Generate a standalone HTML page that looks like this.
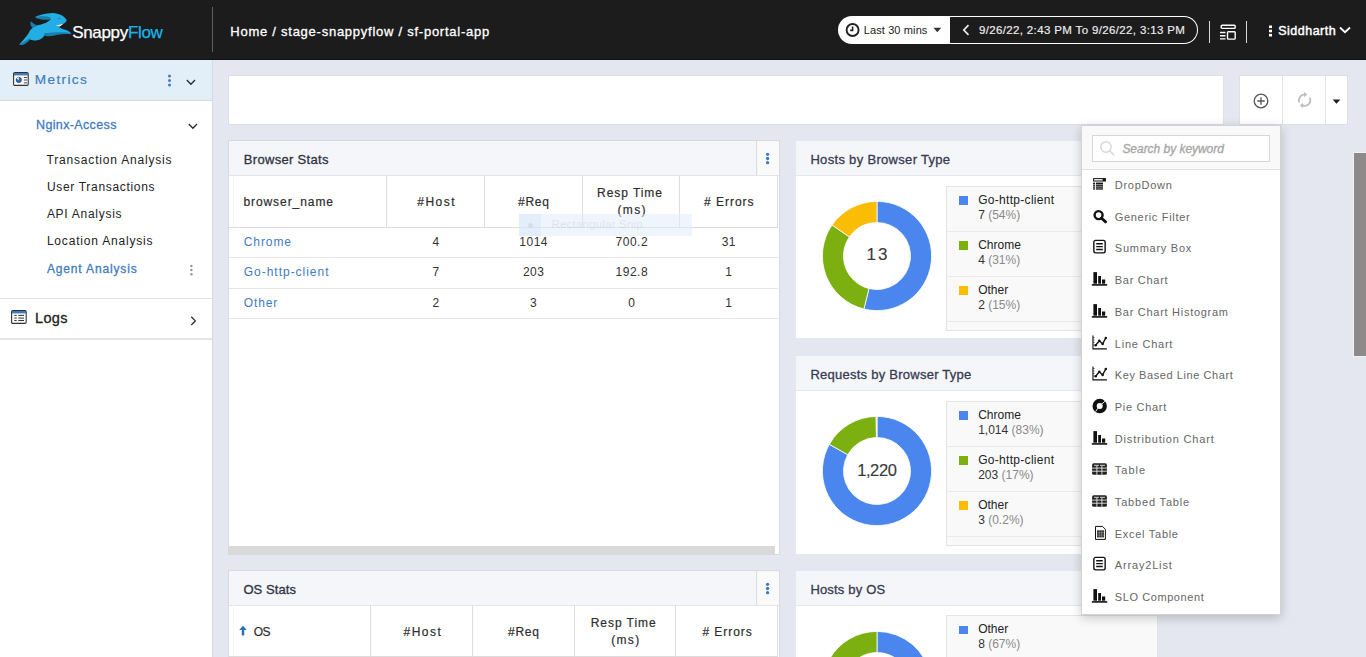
<!DOCTYPE html>
<html><head><meta charset="utf-8">
<style>
*{box-sizing:border-box;margin:0;padding:0}
html,body{width:1366px;height:657px;overflow:hidden}
body{position:relative;background:#e4e7ef;font-family:"Liberation Sans",sans-serif;color:#222}
.a{position:absolute;white-space:nowrap;line-height:normal}
.panel{background:#fff;border:1px solid #dcdfe5}
.ph{background:#f5f6f8;border-bottom:1px solid #e2e4e9}
.vl{position:absolute;background:#dedede;width:1px}
.hl{position:absolute;background:#e6e6e6;height:1px}
</style></head>
<body>
<div class="a" style="left:0;top:0;width:1366px;height:60px;background:#1c1c1c"></div>
<div class="a" style="left:0;top:59px;width:1366px;height:1px;background:#121212"></div>
<svg class="a" style="left:17px;top:10px" width="56" height="38" viewBox="0 0 968 657">
 <path fill="#22aee5" d="M310 125 C360 90 480 55 620 50 C720 55 820 100 860 175 C850 210 830 222 820 225 C770 245 720 258 685 266 C720 295 780 330 850 345 C900 365 935 395 940 420 C880 400 760 395 640 410 C560 420 500 430 470 440 C450 490 380 528 300 526 C260 525 235 515 222 505 C170 545 100 590 35 598 C80 555 140 480 200 400 C230 340 270 295 340 270 C450 240 530 225 580 160 C520 125 420 115 310 125 Z"/>
 <path fill="#177fae" d="M310 130 C380 105 480 100 545 115 C575 125 590 145 585 160 C540 175 460 170 400 158 C360 150 330 142 310 130 Z"/>
 <path fill="#177fae" d="M235 195 C270 225 320 255 345 268 C310 280 280 295 265 305 C240 290 222 240 235 195 Z"/>
 <path fill="#177fae" d="M470 400 C560 395 700 380 820 385 C880 390 925 405 940 420 C880 410 780 410 700 430 C620 455 520 460 470 440 Z"/>
 <path fill="#177fae" d="M35 598 C110 560 170 520 235 480 C220 530 170 580 110 600 C80 610 50 608 35 598 Z"/>
 <path fill="#d7f0e6" d="M672 266 C720 255 790 238 822 224 C790 258 760 276 735 290 C715 282 690 272 672 266 Z"/>
 <path fill="#1c1c1c" d="M735 290 C760 276 790 258 822 224 C810 262 790 295 790 318 C770 312 750 300 735 290 Z"/>
 <circle cx="728" cy="148" r="13" fill="#0e6e92"/>
</svg>
<div class="a" style="left:72.2px;top:22.9px;font-size:17px;color:#fff;letter-spacing:-0.32px;-webkit-text-stroke:0.25px #fff">Snappy<span style="color:#1ab4ea;-webkit-text-stroke:0.25px #1ab4ea">Flow</span></div>
<div class="a" style="left:212px;top:7px;width:1px;height:45px;background:#5e5e5e"></div>
<div class="a" style="left:230.30px;top:23.61px;font-size:13px;color:#fff;letter-spacing:0.747px;-webkit-text-stroke:0.3px #fff;">Home / stage-snappyflow / sf-portal-app</div>
<div class="a" style="left:838px;top:16px;width:360px;height:28px;border-radius:14px;background:#fff"></div>
<div class="a" style="left:950px;top:17px;width:247px;height:26px;border-radius:0 13px 13px 0;background:#1c1c1c"></div>
<svg class="a" style="left:845px;top:22px" width="16" height="16" viewBox="0 0 16 16"><circle cx="7.6" cy="8" r="6" fill="none" stroke="#222" stroke-width="1.9"/><path d="M7.6 4.6V8.4H5.2" fill="none" stroke="#222" stroke-width="1.6"/></svg>
<div class="a" style="left:863.70px;top:23.54px;font-size:11px;color:#222;letter-spacing:0.120px;">Last 30 mins</div>
<svg class="a" style="left:933px;top:27px" width="9" height="6" viewBox="0 0 9 6"><path d="M0.5 0.8H8.2L4.35 5.2Z" fill="#333"/></svg>
<svg class="a" style="left:961px;top:24px" width="10" height="12" viewBox="0 0 10 12"><path d="M7.5 1.2L2.8 6L7.5 10.8" fill="none" stroke="#eee" stroke-width="1.7"/></svg>
<div class="a" style="left:978.90px;top:24.08px;font-size:11.5px;color:#ececec;letter-spacing:0.357px;-webkit-text-stroke:0.18px #ececec;">9/26/22, 2:43 PM To 9/26/22, 3:13 PM</div>
<div class="a" style="left:1209px;top:21px;width:1px;height:22px;background:#d8d8d8"></div>
<svg class="a" style="left:1219px;top:23.5px" width="18" height="17" viewBox="0 0 18 17"><rect x="2.2" y="1.2" width="14" height="3.2" rx="1" fill="none" stroke="#fff" stroke-width="1.4"/><rect x="8.5" y="7.8" width="7.7" height="7.3" rx="0.8" fill="none" stroke="#fff" stroke-width="1.4"/><path d="M1 8.5H6.5M1 11.7H6.5M1 14.9H6.5" stroke="#fff" stroke-width="1.4"/></svg>
<div class="a" style="left:1246px;top:21px;width:1px;height:22px;background:#d8d8d8"></div>
<svg class="a" style="left:1268px;top:25px" width="5" height="12" viewBox="0 0 5 12"><rect x="1" y="0.5" width="3" height="2.6" fill="#fff"/><rect x="1" y="4.7" width="3" height="2.6" fill="#fff"/><rect x="1" y="8.9" width="3" height="2.6" fill="#fff"/></svg>
<div class="a" style="left:1278.20px;top:24.06px;font-size:12.5px;color:#fff;letter-spacing:0.498px;-webkit-text-stroke:0.3px #fff;-webkit-text-stroke:0.45px #fff;">Siddharth</div>
<svg class="a" style="left:1339px;top:26px" width="12" height="8" viewBox="0 0 12 8"><path d="M1 1.5L6 6.2L11 1.5" fill="none" stroke="#fff" stroke-width="1.8"/></svg>
<div class="a" style="left:0;top:60px;width:213px;height:597px;background:#fff;border-right:1px solid #d6d9e0"></div>
<div class="a" style="left:0;top:60px;width:212px;height:41px;background:#e2eff8;border-bottom:1.5px solid #d9dbdf"></div>
<svg class="a" style="left:13px;top:72px" width="16" height="14" viewBox="0 0 16 14"><rect x="0.6" y="0.6" width="14.6" height="12.8" rx="1.2" fill="#fcfcfc" stroke="#333" stroke-width="1.1"/><rect x="1.1" y="1.1" width="13.6" height="1.7" fill="#1a73d0"/><path d="M1 3.1H15" stroke="#333" stroke-width="0.5"/><circle cx="5.8" cy="7.9" r="2.6" fill="#1a73d0" stroke="#333" stroke-width="0.7"/><path d="M5.8 7.9V5.3A2.6 2.6 0 0 0 3.6 6.5Z" fill="#fff"/><path d="M10.9 5.5H14M10.9 8H14M10.9 10.9H14" stroke="#333" stroke-width="0.9"/></svg>
<div class="a" style="left:34.80px;top:72.16px;font-size:13.6px;color:#3f7cbf;letter-spacing:1.348px;-webkit-text-stroke:0.2px #3f7cbf;">Metrics</div>
<svg class="a" style="left:167px;top:74px" width="5" height="13" viewBox="0 0 5 13"><circle cx="2.5" cy="2" r="1.5" fill="#3f7cbf"/><circle cx="2.5" cy="6.5" r="1.5" fill="#3f7cbf"/><circle cx="2.5" cy="11" r="1.5" fill="#3f7cbf"/></svg>
<svg class="a" style="left:186px;top:79px" width="10" height="7" viewBox="0 0 10 7"><path d="M0.8 1L4.9 5.3L9 1" fill="none" stroke="#2a2a2a" stroke-width="1.3"/></svg>
<div class="a" style="left:36.00px;top:117.56px;font-size:12.5px;color:#3f7cbf;letter-spacing:0.362px;-webkit-text-stroke:0.3px #3f7cbf;">Nginx-Access</div>
<svg class="a" style="left:188px;top:123.3px" width="10" height="7" viewBox="0 0 10 7"><path d="M0.8 1L4.9 5.3L9 1" fill="none" stroke="#2a2a2a" stroke-width="1.3"/></svg>
<div class="a" style="left:46.60px;top:152.92px;font-size:12px;color:#222;letter-spacing:0.810px;">Transaction Analysis</div>
<div class="a" style="left:46.90px;top:179.92px;font-size:12px;color:#222;letter-spacing:0.687px;">User Transactions</div>
<div class="a" style="left:46.90px;top:207.02px;font-size:12px;color:#222;letter-spacing:0.727px;">API Analysis</div>
<div class="a" style="left:46.90px;top:234.02px;font-size:12px;color:#222;letter-spacing:0.810px;">Location Analysis</div>
<div class="a" style="left:46.90px;top:261.52px;font-size:12px;color:#3f7cbf;letter-spacing:0.852px;-webkit-text-stroke:0.3px #3f7cbf;">Agent Analysis</div>
<svg class="a" style="left:189px;top:263.5px" width="5" height="13" viewBox="0 0 5 13"><circle cx="2.4" cy="2" r="1.25" fill="#999"/><circle cx="2.4" cy="6.1" r="1.25" fill="#999"/><circle cx="2.4" cy="10.2" r="1.25" fill="#999"/></svg>
<div class="a" style="left:0;top:298px;width:212px;height:1px;background:#e3e3e6"></div>
<svg class="a" style="left:11px;top:310px" width="16" height="14" viewBox="0 0 16 14"><rect x="0.6" y="0.6" width="14.6" height="12.8" rx="1.2" fill="#fcfcfc" stroke="#333" stroke-width="1.1"/><rect x="1.1" y="1.1" width="13.6" height="1.7" fill="#1a73d0"/><path d="M1 3.1H15" stroke="#333" stroke-width="0.5"/><path d="M3.3 5.4H5.7M3.3 8.1H5.7M3.3 10.5H5.7M7.3 5.4H13M7.3 8.1H13M7.3 10.5H13" stroke="#333" stroke-width="1"/></svg>
<div class="a" style="left:35.00px;top:310.03px;font-size:14.5px;color:#222;letter-spacing:0.316px;-webkit-text-stroke:0.3px #222;">Logs</div>
<svg class="a" style="left:190px;top:316px" width="7" height="10" viewBox="0 0 7 10"><path d="M1.3 0.8L5.3 4.9L1.3 9" fill="none" stroke="#2a2a2a" stroke-width="1.3"/></svg>
<div class="a" style="left:0;top:338px;width:212px;height:1.5px;background:#e3e5e9"></div>
<div class="a panel" style="left:228px;top:75px;width:996px;height:50px"></div>
<div class="a panel" style="left:1239px;top:75px;width:109px;height:50px"></div>
<div class="vl" style="left:1282px;top:76px;height:48px;background:#e4e4e4"></div>
<div class="vl" style="left:1325px;top:76px;height:48px;background:#e4e4e4"></div>
<svg class="a" style="left:1252.5px;top:92.5px" width="16" height="16" viewBox="0 0 16 16"><circle cx="8" cy="8" r="6.8" fill="none" stroke="#555" stroke-width="1.3"/><path d="M8 4.3V11.7M4.3 8H11.7" stroke="#555" stroke-width="1.3"/></svg>
<svg class="a" style="left:1294px;top:90px" width="20" height="20" viewBox="0 0 20 20"><path d="M5.3 12.3A5.5 5.5 0 0 1 10.2 4.6M15.6 7.6A5.5 5.5 0 0 1 8.8 15.4" fill="none" stroke="#bdbdbd" stroke-width="1.8"/><path d="M13.3 4.6L10 1.9V7.3Z M5.8 15.4L9.1 12.7V18.1Z" fill="#bdbdbd"/></svg>
<svg class="a" style="left:1332px;top:98.5px" width="9" height="6" viewBox="0 0 9 6"><path d="M0.6 0.6H8.4L4.5 4.8Z" fill="#222"/></svg>
<div class="a" style="left:1353px;top:152px;width:14px;height:205px;background:#8e8a8a;border:1px solid #f2f2f4;border-right:none"></div>
<div class="a panel" style="left:228px;top:140px;width:552px;height:415px;border-color:#dadada"></div>
<div class="a ph" style="left:229px;top:141px;width:550px;height:35px;background:#f5f6f9"></div>
<div class="a" style="left:243.80px;top:151.70px;font-size:13px;color:#2e3344;letter-spacing:0.307px;-webkit-text-stroke:0.3px #2e3344;">Browser Stats</div>
<div class="vl" style="left:756px;top:141px;height:34px;background:#dcdcdc"></div>
<div class="a" style="left:758px;top:142px;width:21px;height:33px;background:#fafafa"></div>
<svg class="a" style="left:765px;top:152px" width="5" height="13" viewBox="0 0 5 13"><circle cx="2.6" cy="2.3" r="1.65" fill="#3b7bc4"/><circle cx="2.6" cy="6.5" r="1.65" fill="#3b7bc4"/><circle cx="2.6" cy="10.7" r="1.65" fill="#3b7bc4"/></svg>
<div class="vl" style="left:386px;top:176px;height:51px"></div>
<div class="vl" style="left:484px;top:176px;height:51px"></div>
<div class="vl" style="left:582px;top:176px;height:51px"></div>
<div class="vl" style="left:679px;top:176px;height:51px"></div>
<div class="vl" style="left:777px;top:176px;height:51px"></div>
<div class="vl" style="left:233px;top:176px;height:51px;background:#f6f6f6"></div>
<div class="hl" style="left:229px;top:227px;width:549px;background:#dcdcdc"></div>
<div class="a" style="left:243.40px;top:195.02px;font-size:12px;color:#2b2b2b;letter-spacing:0.930px;-webkit-text-stroke:0.18px #2b2b2b;">browser_name</div>
<div class="a" style="left:417.30px;top:195.22px;font-size:12px;color:#2b2b2b;letter-spacing:1.460px;-webkit-text-stroke:0.18px #2b2b2b;">#Host</div>
<div class="a" style="left:518.10px;top:195.22px;font-size:12px;color:#2b2b2b;letter-spacing:0.704px;-webkit-text-stroke:0.18px #2b2b2b;">#Req</div>
<div class="a" style="left:597.05px;top:186.02px;font-size:12px;color:#2b2b2b;letter-spacing:0.943px;-webkit-text-stroke:0.18px #2b2b2b;">Resp Time</div>
<div class="a" style="left:617.45px;top:202.72px;font-size:12px;color:#2b2b2b;letter-spacing:1.367px;-webkit-text-stroke:0.18px #2b2b2b;">(ms)</div>
<div class="a" style="left:704.10px;top:195.02px;font-size:12px;color:#2b2b2b;letter-spacing:0.959px;-webkit-text-stroke:0.18px #2b2b2b;"># Errors</div>
<div class="a" style="left:519px;top:214px;width:173px;height:21.5px;background:rgba(222,236,252,0.5)"></div>
<div class="a" style="left:519px;top:214px;width:22px;height:21.5px;background:rgba(210,226,246,0.35)"></div>
<div class="a" style="left:527.5px;top:222.5px;width:5px;height:5px;border-radius:3px;background:rgba(200,210,225,0.6)"></div>
<div class="a" style="left:551.5px;top:217.5px;font-size:11.5px;color:rgba(150,165,185,0.22);letter-spacing:0.2px">Rectangular Snip</div>
<div class="hl" style="left:229px;top:257px;width:549px"></div>
<div class="hl" style="left:229px;top:288px;width:549px"></div>
<div class="hl" style="left:229px;top:318px;width:549px"></div>
<div class="a" style="left:243.80px;top:234.82px;font-size:12px;color:#3f7cbf;letter-spacing:0.903px;">Chrome</div>
<div class="a" style="left:432.46px;top:234.82px;font-size:12px;color:#333;">4</div>
<div class="a" style="left:519.30px;top:234.82px;font-size:12px;color:#333;letter-spacing:0.500px;">1014</div>
<div class="a" style="left:615.58px;top:234.82px;font-size:12px;color:#333;letter-spacing:0.500px;">700.2</div>
<div class="a" style="left:721.67px;top:234.82px;font-size:12px;color:#333;letter-spacing:0.500px;">31</div>
<div class="a" style="left:243.80px;top:264.82px;font-size:12px;color:#3f7cbf;letter-spacing:0.975px;">Go-http-client</div>
<div class="a" style="left:432.46px;top:264.82px;font-size:12px;color:#333;">7</div>
<div class="a" style="left:522.88px;top:264.82px;font-size:12px;color:#333;letter-spacing:0.500px;">203</div>
<div class="a" style="left:615.58px;top:264.82px;font-size:12px;color:#333;letter-spacing:0.500px;">192.8</div>
<div class="a" style="left:725.26px;top:264.82px;font-size:12px;color:#333;letter-spacing:0.500px;">1</div>
<div class="a" style="left:243.80px;top:295.72px;font-size:12px;color:#3f7cbf;letter-spacing:0.871px;">Other</div>
<div class="a" style="left:432.46px;top:295.72px;font-size:12px;color:#333;">2</div>
<div class="a" style="left:530.06px;top:295.72px;font-size:12px;color:#333;letter-spacing:0.500px;">3</div>
<div class="a" style="left:628.26px;top:295.72px;font-size:12px;color:#333;letter-spacing:0.500px;">0</div>
<div class="a" style="left:725.26px;top:295.72px;font-size:12px;color:#333;letter-spacing:0.500px;">1</div>
<div class="a" style="left:229px;top:546px;width:546px;height:8.5px;background:#d9d9d9"></div>
<div class="a panel" style="left:228px;top:570px;width:552px;height:100px;border-color:#dadada"></div>
<div class="a ph" style="left:229px;top:571px;width:550px;height:35px;background:#f5f6f9"></div>
<div class="a" style="left:243.40px;top:581.50px;font-size:13px;color:#2e3344;letter-spacing:0.067px;-webkit-text-stroke:0.3px #2e3344;">OS Stats</div>
<div class="vl" style="left:756px;top:571px;height:34px;background:#dcdcdc"></div>
<div class="a" style="left:758px;top:572px;width:21px;height:33px;background:#fafafa"></div>
<svg class="a" style="left:765px;top:582px" width="5" height="13" viewBox="0 0 5 13"><circle cx="2.6" cy="2.3" r="1.65" fill="#3b7bc4"/><circle cx="2.6" cy="6.5" r="1.65" fill="#3b7bc4"/><circle cx="2.6" cy="10.7" r="1.65" fill="#3b7bc4"/></svg>
<div class="vl" style="left:370px;top:605px;height:52px"></div>
<div class="vl" style="left:472px;top:605px;height:52px"></div>
<div class="vl" style="left:574px;top:605px;height:52px"></div>
<div class="vl" style="left:675px;top:605px;height:52px"></div>
<div class="vl" style="left:777px;top:605px;height:52px"></div>
<div class="vl" style="left:233px;top:605px;height:52px;background:#f6f6f6"></div>
<div class="hl" style="left:229px;top:656px;width:549px;background:#dcdcdc"></div>
<svg class="a" style="left:238px;top:625px" width="10" height="11" viewBox="0 0 10 11"><path d="M5 0.8L8.8 5H6.2V10.5H3.8V5H1.2Z" fill="#2f6fb3"/></svg>
<div class="a" style="left:253.80px;top:624.72px;font-size:12px;color:#2b2b2b;letter-spacing:-0.744px;-webkit-text-stroke:0.18px #2b2b2b;">OS</div>
<div class="a" style="left:403.60px;top:624.72px;font-size:12px;color:#2b2b2b;letter-spacing:1.460px;-webkit-text-stroke:0.18px #2b2b2b;">#Host</div>
<div class="a" style="left:508.00px;top:624.72px;font-size:12px;color:#2b2b2b;letter-spacing:0.704px;-webkit-text-stroke:0.18px #2b2b2b;">#Req</div>
<div class="a" style="left:590.75px;top:616.02px;font-size:12px;color:#2b2b2b;letter-spacing:0.943px;-webkit-text-stroke:0.18px #2b2b2b;">Resp Time</div>
<div class="a" style="left:611.15px;top:633.32px;font-size:12px;color:#2b2b2b;letter-spacing:1.367px;-webkit-text-stroke:0.18px #2b2b2b;">(ms)</div>
<div class="a" style="left:702.40px;top:624.72px;font-size:12px;color:#2b2b2b;letter-spacing:0.959px;-webkit-text-stroke:0.18px #2b2b2b;"># Errors</div>
<div class="a" style="left:796px;top:141px;width:361px;height:197px;background:#fff"></div>
<div class="a" style="left:796px;top:141px;width:361px;height:35px;background:#f5f6f9;border-bottom:1px solid #e6e7eb"></div>
<div class="a" style="left:810.40px;top:151.60px;font-size:13px;color:#363b52;letter-spacing:0.314px;-webkit-text-stroke:0.3px #363b52;">Hosts by Browser Type</div>
<svg class="a" style="left:817px;top:196px" width="120" height="120" viewBox="-60 -60 120 120"><path fill="#4a86ee" stroke="#fff" stroke-width="0.8" d="M0.00 -54.60A54.6 54.6 0 1 1 -13.07 53.01L-8.02 32.53A33.5 33.5 0 1 0 0.00 -33.50Z"/><path fill="#7cb011" stroke="#fff" stroke-width="0.8" d="M-13.07 53.01A54.6 54.6 0 0 1 -44.93 -31.02L-27.57 -19.03A33.5 33.5 0 0 0 -8.02 32.53Z"/><path fill="#fbbc05" stroke="#fff" stroke-width="0.8" d="M-44.93 -31.02A54.6 54.6 0 0 1 -0.00 -54.60L-0.00 -33.50A33.5 33.5 0 0 0 -27.57 -19.03Z"/></svg>
<div class="a" style="left:866.50px;top:245.05px;font-size:17px;color:#3a3a3a;letter-spacing:2.078px;-webkit-text-stroke:0.15px #3a3a3a;">13</div>
<div class="a" style="left:946px;top:185.9px;width:212px;height:145px;background:#f9f9fa;border:1px solid #e4e4e4"></div>
<div class="a" style="left:959px;top:196.4px;width:9px;height:8.5px;background:#4a86ee"></div>
<div class="a" style="left:978.20px;top:193.22px;font-size:12px;color:#222;letter-spacing:0.298px;">Go-http-client</div>
<div class="a" style="left:978.2px;top:208.02px;font-size:12px;color:#333">7 <span style="color:#8a8a8a">(54%)</span></div>
<div class="hl" style="left:947px;top:230.9px;width:210px;background:#e9e9e9"></div>
<div class="a" style="left:959px;top:241.4px;width:9px;height:8.5px;background:#7cb011"></div>
<div class="a" style="left:978.20px;top:238.22px;font-size:12px;color:#222;">Chrome</div>
<div class="a" style="left:978.2px;top:253.02px;font-size:12px;color:#333">4 <span style="color:#8a8a8a">(31%)</span></div>
<div class="hl" style="left:947px;top:275.9px;width:210px;background:#e9e9e9"></div>
<div class="a" style="left:959px;top:286.4px;width:9px;height:8.5px;background:#fbbc05"></div>
<div class="a" style="left:978.20px;top:283.22px;font-size:12px;color:#222;">Other</div>
<div class="a" style="left:978.2px;top:298.02px;font-size:12px;color:#333">2 <span style="color:#8a8a8a">(15%)</span></div>
<div class="hl" style="left:947px;top:320.9px;width:210px;background:#e9e9e9"></div>
<div class="a" style="left:796px;top:356px;width:361px;height:197.5px;background:#fff"></div>
<div class="a" style="left:796px;top:356px;width:361px;height:35px;background:#f5f6f9;border-bottom:1px solid #e6e7eb"></div>
<div class="a" style="left:810.40px;top:366.91px;font-size:13px;color:#363b52;letter-spacing:0.251px;-webkit-text-stroke:0.3px #363b52;">Requests by Browser Type</div>
<svg class="a" style="left:817px;top:411px" width="120" height="120" viewBox="-60 -60 120 120"><path fill="#4a86ee" stroke="#fff" stroke-width="0.8" d="M0.00 -54.60A54.6 54.6 0 1 1 -47.66 -26.65L-29.24 -16.35A33.5 33.5 0 1 0 0.00 -33.50Z"/><path fill="#7cb011" stroke="#fff" stroke-width="0.8" d="M-47.66 -26.65A54.6 54.6 0 0 1 -0.84 -54.59L-0.52 -33.50A33.5 33.5 0 0 0 -29.24 -16.35Z"/><path fill="#fbbc05" stroke="#fff" stroke-width="0.8" d="M-0.84 -54.59A54.6 54.6 0 0 1 -0.00 -54.60L-0.00 -33.50A33.5 33.5 0 0 0 -0.52 -33.50Z"/></svg>
<div class="a" style="left:857.15px;top:461.10px;font-size:16.5px;color:#3a3a3a;letter-spacing:-0.399px;-webkit-text-stroke:0.15px #3a3a3a;">1,220</div>
<div class="a" style="left:946px;top:400.5px;width:212px;height:145px;background:#f9f9fa;border:1px solid #e4e4e4"></div>
<div class="a" style="left:959px;top:411.0px;width:9px;height:8.5px;background:#4a86ee"></div>
<div class="a" style="left:978.20px;top:407.82px;font-size:12px;color:#222;">Chrome</div>
<div class="a" style="left:978.2px;top:422.62px;font-size:12px;color:#333">1,014 <span style="color:#8a8a8a">(83%)</span></div>
<div class="hl" style="left:947px;top:445.5px;width:210px;background:#e9e9e9"></div>
<div class="a" style="left:959px;top:456.0px;width:9px;height:8.5px;background:#7cb011"></div>
<div class="a" style="left:978.20px;top:452.82px;font-size:12px;color:#222;letter-spacing:0.298px;">Go-http-client</div>
<div class="a" style="left:978.2px;top:467.62px;font-size:12px;color:#333">203 <span style="color:#8a8a8a">(17%)</span></div>
<div class="hl" style="left:947px;top:490.5px;width:210px;background:#e9e9e9"></div>
<div class="a" style="left:959px;top:501.0px;width:9px;height:8.5px;background:#fbbc05"></div>
<div class="a" style="left:978.20px;top:497.82px;font-size:12px;color:#222;">Other</div>
<div class="a" style="left:978.2px;top:512.62px;font-size:12px;color:#333">3 <span style="color:#8a8a8a">(0.2%)</span></div>
<div class="hl" style="left:947px;top:535.5px;width:210px;background:#e9e9e9"></div>
<div class="a" style="left:796px;top:571px;width:361px;height:100px;background:#fff"></div>
<div class="a" style="left:796px;top:571px;width:361px;height:35px;background:#f5f6f9;border-bottom:1px solid #e6e7eb"></div>
<div class="a" style="left:810.40px;top:582.31px;font-size:13px;color:#363b52;letter-spacing:0.173px;-webkit-text-stroke:0.3px #363b52;">Hosts by OS</div>
<svg class="a" style="left:817px;top:625.6px" width="120" height="120" viewBox="-60 -60 120 120"><path fill="#4a86ee" stroke="#fff" stroke-width="0.8" d="M0.00 -54.60A54.6 54.6 0 1 1 -47.28 27.30L-29.01 16.75A33.5 33.5 0 1 0 0.00 -33.50Z"/><path fill="#7cb011" stroke="#fff" stroke-width="0.8" d="M-47.28 27.30A54.6 54.6 0 0 1 -0.00 -54.60L-0.00 -33.50A33.5 33.5 0 0 0 -29.01 16.75Z"/></svg>
<div class="a" style="left:946px;top:615px;width:212px;height:60px;background:#f9f9fa;border:1px solid #e4e4e4"></div>
<div class="a" style="left:959px;top:625.5px;width:9px;height:8.5px;background:#4a86ee"></div>
<div class="a" style="left:978.20px;top:622.32px;font-size:12px;color:#222;">Other</div>
<div class="a" style="left:978.2px;top:637.12px;font-size:12px;color:#333">8 <span style="color:#8a8a8a">(67%)</span></div>
<div class="a" style="left:1081px;top:125px;width:200px;height:490px;background:#fff;border:1px solid #d3d3d3;box-shadow:0 3px 10px rgba(0,0,0,0.2)"></div>
<div class="a" style="left:1082px;top:126px;width:198px;height:44px;background:#f9f9f9;border-bottom:1px solid #e2e2e2"></div>
<div class="a" style="left:1092px;top:135px;width:178px;height:27px;background:#fff;border:1px solid #d6d6d6"></div>
<svg class="a" style="left:1099px;top:140px" width="18" height="18" viewBox="0 0 18 18"><circle cx="7" cy="7" r="5.2" fill="none" stroke="#d6d6de" stroke-width="1.4"/><path d="M10.8 10.8L14.6 14.6" stroke="#d6d6de" stroke-width="1.5" stroke-linecap="round"/></svg>
<div class="a" style="left:1122.40px;top:141.92px;font-size:12px;color:#a5a5a5;letter-spacing:-0.034px;-webkit-text-stroke:0.3px #a5a5a5;font-style:italic;">Search by keyword</div>
<svg class="a" style="left:1091px;top:176.4px" width="17" height="16" viewBox="0 0 17 16"><rect x="2.6" y="2.6" width="11.8" height="2.4" fill="none" stroke="#111" stroke-width="1"/><rect x="11.6" y="2.6" width="2.8" height="2.4" fill="#111"/><rect x="2.1" y="6.6" width="2" height="7" fill="#111"/><rect x="5" y="6.6" width="7" height="7" fill="#111"/><path d="M2 8.45H12.5M2 10.25H12.5M2 12.05H12.5" stroke="#fff" stroke-width="0.55"/></svg>
<div class="a" style="left:1114.80px;top:179.34px;font-size:11px;color:#666;letter-spacing:0.719px;">DropDown</div>
<svg class="a" style="left:1091px;top:208.0px" width="17" height="16" viewBox="0 0 17 16"><circle cx="7.6" cy="7.1" r="4" fill="none" stroke="#111" stroke-width="2.4"/><path d="M10.6 10.2L14.6 13.9" stroke="#111" stroke-width="2.8" stroke-linecap="round"/></svg>
<div class="a" style="left:1114.80px;top:210.94px;font-size:11px;color:#666;letter-spacing:0.675px;">Generic Filter</div>
<svg class="a" style="left:1091px;top:239.2px" width="17" height="16" viewBox="0 0 17 16"><rect x="2.85" y="1.35" width="11.3" height="12.5" rx="1.8" fill="none" stroke="#111" stroke-width="1.4"/><path d="M5.2 4.7H11.8M5.2 7.6H11.8M5.2 10.5H11.8" stroke="#111" stroke-width="1.4"/></svg>
<div class="a" style="left:1114.80px;top:242.13px;font-size:11px;color:#666;letter-spacing:0.742px;">Summary Box</div>
<svg class="a" style="left:1091px;top:270.9px" width="17" height="16" viewBox="0 0 17 16"><rect x="2.4" y="1.1" width="3.6" height="11.6" fill="#111"/><rect x="7.2" y="5" width="2.8" height="7.7" fill="#111"/><rect x="11" y="8.5" width="3.2" height="4.2" fill="#111"/><rect x="0.8" y="13.1" width="15.4" height="1.6" fill="#111"/></svg>
<div class="a" style="left:1114.80px;top:273.83px;font-size:11px;color:#666;letter-spacing:0.715px;">Bar Chart</div>
<svg class="a" style="left:1091px;top:303.0px" width="17" height="16" viewBox="0 0 17 16"><rect x="2.4" y="1.1" width="3.6" height="11.6" fill="#111"/><rect x="7.2" y="5" width="2.8" height="7.7" fill="#111"/><rect x="11" y="8.5" width="3.2" height="4.2" fill="#111"/><rect x="0.8" y="13.1" width="15.4" height="1.6" fill="#111"/></svg>
<div class="a" style="left:1114.80px;top:305.94px;font-size:11px;color:#666;letter-spacing:0.719px;">Bar Chart Histogram</div>
<svg class="a" style="left:1091px;top:335.3px" width="17" height="16" viewBox="0 0 17 16"><path d="M1.95 0.4V13.9H15.9" fill="none" stroke="#111" stroke-width="1.1"/><path d="M2.4 2.5H3.4M2.4 5H3.4M2.4 7.5H3.4M2.4 10H3.4" stroke="#111" stroke-width="0.9"/><path d="M4.7 10.2L8.3 5.7L11.6 8.9L14.8 3" fill="none" stroke="#111" stroke-width="1.4"/><circle cx="4.7" cy="10.2" r="1.25" fill="#111"/><circle cx="8.3" cy="5.7" r="1.25" fill="#111"/><circle cx="11.6" cy="8.9" r="1.25" fill="#111"/><circle cx="14.8" cy="3" r="1.25" fill="#111"/></svg>
<div class="a" style="left:1114.80px;top:338.24px;font-size:11px;color:#666;letter-spacing:0.759px;">Line Chart</div>
<svg class="a" style="left:1091px;top:366.4px" width="17" height="16" viewBox="0 0 17 16"><path d="M1.95 0.4V13.9H15.9" fill="none" stroke="#111" stroke-width="1.1"/><path d="M2.4 2.5H3.4M2.4 5H3.4M2.4 7.5H3.4M2.4 10H3.4" stroke="#111" stroke-width="0.9"/><path d="M4.7 10.2L8.3 5.7L11.6 8.9L14.8 3" fill="none" stroke="#111" stroke-width="1.4"/><circle cx="4.7" cy="10.2" r="1.25" fill="#111"/><circle cx="8.3" cy="5.7" r="1.25" fill="#111"/><circle cx="11.6" cy="8.9" r="1.25" fill="#111"/><circle cx="14.8" cy="3" r="1.25" fill="#111"/></svg>
<div class="a" style="left:1114.80px;top:369.33px;font-size:11px;color:#666;letter-spacing:0.573px;">Key Based Line Chart</div>
<svg class="a" style="left:1091px;top:398.1px" width="17" height="16" viewBox="0 0 17 16"><circle cx="8.7" cy="8.05" r="5.1" fill="none" stroke="#111" stroke-width="4.2"/><path d="M10 6.7L14 3.2M7.4 9.5L4.6 13.6" stroke="#fff" stroke-width="0.9"/></svg>
<div class="a" style="left:1114.80px;top:401.04px;font-size:11px;color:#666;letter-spacing:0.705px;">Pie Chart</div>
<svg class="a" style="left:1091px;top:430.2px" width="17" height="16" viewBox="0 0 17 16"><rect x="2.4" y="1.1" width="3.6" height="11.6" fill="#111"/><rect x="7.2" y="5" width="2.8" height="7.7" fill="#111"/><rect x="11" y="8.5" width="3.2" height="4.2" fill="#111"/><rect x="0.8" y="13.1" width="15.4" height="1.6" fill="#111"/></svg>
<div class="a" style="left:1114.80px;top:433.13px;font-size:11px;color:#666;letter-spacing:0.819px;">Distribution Chart</div>
<svg class="a" style="left:1091px;top:460.7px" width="17" height="16" viewBox="0 0 17 16"><rect x="1.1" y="2.3" width="14.8" height="11.5" rx="1.6" fill="#222"/><path d="M3 4.3H8M9 4.3H14M1.1 7.1H15.9M1.1 10.2H15.9M5.9 4.8V13.8M10.9 4.8V13.8" stroke="#fff" stroke-width="0.8"/></svg>
<div class="a" style="left:1114.80px;top:463.63px;font-size:11px;color:#666;letter-spacing:1.001px;">Table</div>
<svg class="a" style="left:1091px;top:492.8px" width="17" height="16" viewBox="0 0 17 16"><rect x="1.1" y="2.3" width="14.8" height="11.5" rx="1.6" fill="#222"/><path d="M3 4.3H8M9 4.3H14M1.1 7.1H15.9M1.1 10.2H15.9M5.9 4.8V13.8M10.9 4.8V13.8" stroke="#fff" stroke-width="0.8"/></svg>
<div class="a" style="left:1114.80px;top:495.74px;font-size:11px;color:#666;letter-spacing:0.832px;">Tabbed Table</div>
<svg class="a" style="left:1091px;top:524.9px" width="17" height="16" viewBox="0 0 17 16"><path d="M4.5 1.4H11.5L14.4 4.3V14.4H4.5Z" fill="#fff" stroke="#111" stroke-width="1"/><rect x="6" y="5.3" width="7" height="7.1" fill="#333"/><path d="M6 7.7H13M6 10H13M8.3 5.3V12.4M10.7 5.3V12.4" stroke="#aaa" stroke-width="0.5"/></svg>
<div class="a" style="left:1114.80px;top:527.83px;font-size:11px;color:#666;letter-spacing:0.714px;">Excel Table</div>
<svg class="a" style="left:1091px;top:556.1px" width="17" height="16" viewBox="0 0 17 16"><rect x="2.85" y="1.35" width="11.3" height="12.5" rx="1.8" fill="none" stroke="#111" stroke-width="1.4"/><path d="M5.2 4.7H11.8M5.2 7.6H11.8M5.2 10.5H11.8" stroke="#111" stroke-width="1.4"/></svg>
<div class="a" style="left:1114.80px;top:559.03px;font-size:11px;color:#666;letter-spacing:0.830px;">Array2List</div>
<svg class="a" style="left:1091px;top:587.8px" width="17" height="16" viewBox="0 0 17 16"><rect x="2.4" y="1.1" width="3.6" height="11.6" fill="#111"/><rect x="7.2" y="5" width="2.8" height="7.7" fill="#111"/><rect x="11" y="8.5" width="3.2" height="4.2" fill="#111"/><rect x="0.8" y="13.1" width="15.4" height="1.6" fill="#111"/></svg>
<div class="a" style="left:1114.80px;top:590.73px;font-size:11px;color:#666;letter-spacing:0.580px;">SLO Component</div>
</body></html>
